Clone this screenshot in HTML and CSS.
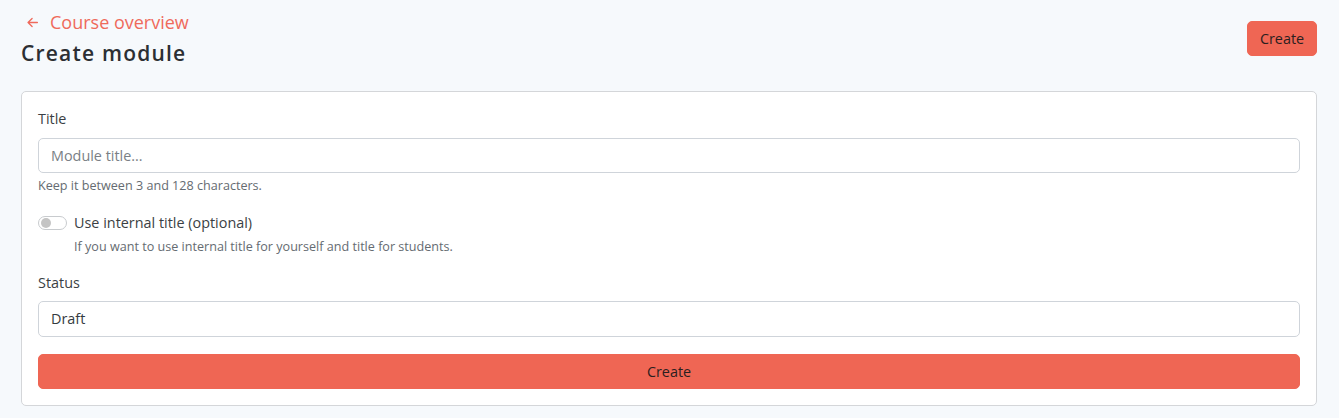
FILE: index.html
```html
<!DOCTYPE html>
<html lang="en">
<head>
<meta charset="utf-8">
<title>Create module</title>
<link rel="stylesheet" href="styles.css">
</head>
<body>
<div class="page">
  <header class="header">
    <div class="header-left">
      <a class="back-link" href="#">
        <svg class="back-icon" viewBox="0 0 16 16" width="13" height="13" aria-hidden="true">
          <path d="M14 8H2.5M7.5 3L2.5 8l5 5" fill="none" stroke="currentColor" stroke-width="1.6" stroke-linecap="round" stroke-linejoin="round"/>
        </svg>
        <span>Course overview</span>
      </a>
      <h1 class="title">Create module</h1>
    </div>
    <button class="btn btn-small" type="button">Create</button>
  </header>

  <form class="card">
    <div class="group">
      <label class="label" for="title">Title</label>
      <input class="input" id="title" type="text" placeholder="Module title...">
      <div class="help">Keep it between 3 and 128 characters.</div>
    </div>

    <div class="group switch-group">
      <div class="switch-row">
        <span class="switch"><span class="knob"></span></span>
        <span class="switch-label">Use internal title (optional)</span>
      </div>
      <div class="help switch-help">If you want to use internal title for yourself and title for students.</div>
    </div>

    <div class="group status-group">
      <label class="label" for="status">Status</label>
      <div class="input select" id="status">Draft</div>
    </div>

    <button class="btn btn-block" type="button">Create</button>
  </form>
</div>
</body>
</html>
```

FILE: styles.css
```css
* { box-sizing: border-box; }

html, body {
  margin: 0;
  padding: 0;
  background: #f6f9fc;
  font-family: "Open Sans", "Noto Sans", sans-serif;
  color: #343a40;
}

.page {
  padding: 10px 22px 12px 21px;
}

.header {
  display: flex;
  align-items: center;
  justify-content: space-between;
}

.header-left {
  display: flex;
  flex-direction: column;
}

.back-link {
  display: flex;
  align-items: center;
  gap: 11px;
  color: #ef6a5b;
  text-decoration: none;
  font-size: 18px;
  line-height: 24px;
  padding-left: 5px;
}

.back-icon { display: block; }

.title {
  margin: 5px 0 0 0;
  font-size: 21px;
  line-height: 28px;
  font-weight: 600;
  color: #2c2f33;
  letter-spacing: 1.2px;
}

.btn {
  font-family: "Open Sans", "Noto Sans", sans-serif;
  font-size: 14.4px;
  color: #2a2020;
  background: #ef6654;
  border: 1px solid #ef6654;
  border-radius: 5px;
  cursor: pointer;
}

.btn-small {
  width: 70px;
  height: 35px;
  padding: 0;
}

.card {
  margin-top: 24px;
  background: #fff;
  border: 1px solid #d4d6d9;
  border-radius: 5px;
  padding: 16px;
  display: flex;
  flex-direction: column;
}

.group {
  display: flex;
  flex-direction: column;
  margin-bottom: 16px;
}

.switch-group {
  margin-bottom: 15px;
}

.status-group {
  margin-bottom: 17px;
}

.label {
  font-size: 14.4px;
  line-height: 21.6px;
  color: #3b3f44;
  margin-bottom: 8px;
}

.input {
  height: 35.5px;
  border: 1px solid #cfd4da;
  border-radius: 5px;
  padding: 0 12px;
  font-family: "Open Sans", "Noto Sans", sans-serif;
  font-size: 14.4px;
  color: #343a40;
  background: #fff;
  outline: none;
}

.input::placeholder { color: #7a7f85; }

.select {
  display: flex;
  align-items: center;
}

.help {
  margin-top: 4px;
  font-size: 12.6px;
  line-height: 18.9px;
  color: #656b71;
}

.switch-row {
  display: flex;
  align-items: center;
  gap: 7px;
}

.switch {
  width: 29px;
  height: 14px;
  border: 1px solid #c8cbce;
  border-radius: 7px;
  background: #fff;
  display: flex;
  align-items: center;
  padding-left: 2px;
}

.knob {
  width: 10px;
  height: 10px;
  border-radius: 50%;
  background: #c4c4c4;
}

.switch-label {
  font-size: 14.4px;
  line-height: 21.6px;
  color: #3b3f44;
}

.switch-help {
  padding-left: 36px;
}

.btn-block {
  width: 100%;
  height: 35px;
}
```
